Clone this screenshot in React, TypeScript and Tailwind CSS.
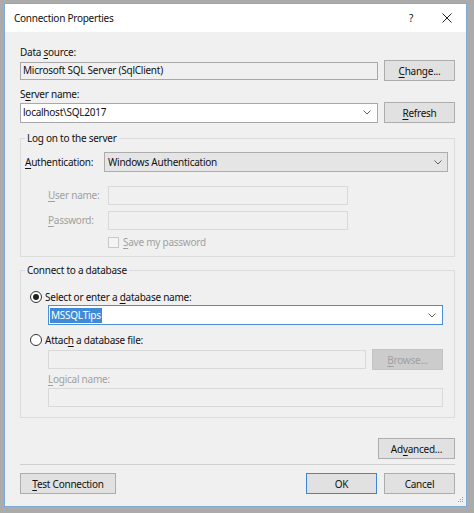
import React from "react"

const FONT = "font-['Noto_Sans',sans-serif] tracking-[-0.25px]"

function Chevron() {
  return (
    <svg width="8" height="5" viewBox="0 0 8 5" className="shrink-0">
      <path d="M0.5 0.5 L4 4 L7.5 0.5" fill="none" stroke="#606060" strokeWidth="1" />
    </svg>
  )
}

function Btn({ children, w = "w-[71px]", disabled = false, primary = false }: { children: React.ReactNode; w?: string; disabled?: boolean; primary?: boolean }) {
  const border = primary ? "border-[#3b86d6]" : disabled ? "border-[#c4c4c4]" : "border-[#adadad]"
  const bg = disabled ? "bg-[#cccccc] text-[#a0a0a0]" : "bg-[#e1e1e1] text-[#111]"
  return (
    <div className={`${w} h-[21px] border ${border} ${bg} flex items-center justify-center leading-none shrink-0`}>
      <span>{children}</span>
    </div>
  )
}

function U({ children }: { children: React.ReactNode }) {
  return <span className="underline underline-offset-2 decoration-1">{children}</span>
}

function Radio({ checked }: { checked?: boolean }) {
  return (
    <div className="w-[12px] h-[12px] rounded-full border border-[#333] bg-white flex items-center justify-center shrink-0">
      {checked && <div className="w-[6px] h-[6px] rounded-full bg-[#222]" />}
    </div>
  )
}

export default function App() {
  return (
    <div className={`w-[474px] h-[513px] bg-[#ababab] pt-[3px] pl-[4px] ${FONT} text-[10px] text-[#111]`}>
      <div className="w-[463px] h-[504px] border border-[#7fa9d6] bg-[#f0f0f0] flex flex-col">
        {/* title bar */}
        <div className="h-[28px] bg-white flex items-center pl-[9px] pr-[14px] shrink-0">
          <span>Connection Properties</span>
          <span className="ml-auto mr-[29px]">?</span>
          <svg width="10" height="10" viewBox="0 0 10 10">
            <path d="M0.5 0.5 L9.5 9.5 M9.5 0.5 L0.5 9.5" stroke="#222" strokeWidth="1" />
          </svg>
        </div>

        <div className="pl-[15px] pr-[11px] flex flex-col flex-1">
          {/* data source */}
          <div className="mt-[13px] h-[14px] leading-[14px]">
            Data <U>s</U>ource:
          </div>
          <div className="mt-[1px] flex items-center gap-[6px]">
            <div className="w-[358px] h-[18px] border border-[#a8a8a8] bg-[#f0f0f0] flex items-center px-[2px]">
              <span>Microsoft SQL Server (SqlClient)</span>
            </div>
            <Btn><U>C</U>hange...</Btn>
          </div>

          {/* server name */}
          <div className="mt-[6px] h-[14px] leading-[14px]">
            S<U>e</U>rver name:
          </div>
          <div className="mt-[1px] flex items-center gap-[6px]">
            <div className="w-[358px] h-[20px] border border-[#a8a8a8] bg-white flex items-center pl-[2px] pr-[6px]">
              <span>localhost\SQL2017</span>
              <span className="ml-auto"><Chevron /></span>
            </div>
            <Btn>
              <U>R</U>efresh
            </Btn>
          </div>

          {/* log on group */}
          <fieldset className="mt-[8px] h-[126px] border border-[#dcdcdc] px-[4px]">
            <legend className="ml-[0px] px-[2px] leading-[14px]">Log on to the server</legend>
            <div className="mt-[7px] h-[20px] flex items-center">
              <span className="w-[79px] shrink-0">
                <U>A</U>uthentication:
              </span>
              <div className="w-[344px] h-[20px] border border-[#acacac] bg-[#e5e5e5] flex items-center pl-[3px] pr-[5px]">
                <span>Windows Authentication</span>
                <span className="ml-auto"><Chevron /></span>
              </div>
            </div>
            <div className="mt-[14px] h-[19px] flex items-center text-[#a0a0a0]">
              <span className="w-[83px] pl-[23px] whitespace-nowrap shrink-0">
                <U>U</U>ser name:
              </span>
              <div className="w-[240px] h-[19px] border border-[#d9d9d9] bg-[#f0f0f0]" />
            </div>
            <div className="mt-[6px] h-[19px] flex items-center text-[#a0a0a0]">
              <span className="w-[83px] pl-[23px] whitespace-nowrap shrink-0">
                <U>P</U>assword:
              </span>
              <div className="w-[240px] h-[19px] border border-[#d9d9d9] bg-[#f0f0f0]" />
            </div>
            <div className="mt-[6px] h-[13px] ml-[83px] flex items-center gap-[4px] text-[#a0a0a0]">
              <div className="w-[11px] h-[11px] border border-[#c8c8c8] bg-[#f4f4f4]" />
              <span>
                <U>S</U>ave my password
              </span>
            </div>
          </fieldset>

          {/* connect group */}
          <fieldset className="mt-[6px] h-[155px] border border-[#dcdcdc] px-[9px]">
            <legend className="ml-[-5px] px-[2px] leading-[14px]">Connect to a database</legend>
            <div className="mt-[13px] h-[14px] flex items-center gap-[3px]">
              <Radio checked />
              <span>
                Select or enter a <U>d</U>atabase name:
              </span>
            </div>
            <div className="mt-[1px] ml-[18px] w-[395px] h-[20px] border border-[#4a90d9] bg-white flex items-center pl-[1px] pr-[6px]">
              <span className="bg-[#3f8bd8] text-white px-[1px] leading-[15px]">MSSQLTips</span>
              <span className="ml-auto"><Chevron /></span>
            </div>
            <div className="mt-[8px] h-[14px] flex items-center gap-[3px]">
              <Radio />
              <span>
                Attac<U>h</U> a database file:
              </span>
            </div>
            <div className="mt-[2px] ml-[18px] h-[21px] flex items-center gap-[6px]">
              <div className="w-[318px] h-[19px] border border-[#d9d9d9] bg-[#f0f0f0]" />
              <Btn disabled>
                <U>B</U>rowse...
              </Btn>
            </div>
            <div className="mt-[2px] ml-[18px] h-[14px] leading-[14px] text-[#a0a0a0]">
              <U>L</U>ogical name:
            </div>
            <div className="mt-[2px] ml-[18px] w-[395px] h-[19px] border border-[#d9d9d9] bg-[#f0f0f0]" />
          </fieldset>

          <div className="mt-[20px] flex justify-end">
            <Btn w="w-[77px]">
              Ad<U>v</U>anced...
            </Btn>
          </div>
          <div className="mt-[5px] h-px bg-[#d0d0d0]" />
          <div className="mt-[8px] flex items-center">
            <Btn w="w-[96px]">
              <U>T</U>est Connection
            </Btn>
            <div className="ml-auto flex gap-[7px]">
              <Btn primary>OK</Btn>
              <Btn>Cancel</Btn>
            </div>
          </div>
          <div className="mt-auto mb-[3px] -mr-[9px] flex justify-end">
            <svg width="7" height="7" viewBox="0 0 7 7">
              <rect x="5" y="1" width="1" height="1" fill="#9a9a9a" />
              <rect x="3" y="3" width="1" height="1" fill="#9a9a9a" />
              <rect x="5" y="3" width="1" height="1" fill="#9a9a9a" />
              <rect x="1" y="5" width="1" height="1" fill="#9a9a9a" />
              <rect x="3" y="5" width="1" height="1" fill="#9a9a9a" />
              <rect x="5" y="5" width="1" height="1" fill="#9a9a9a" />
            </svg>
          </div>
        </div>
      </div>
    </div>
  )
}
